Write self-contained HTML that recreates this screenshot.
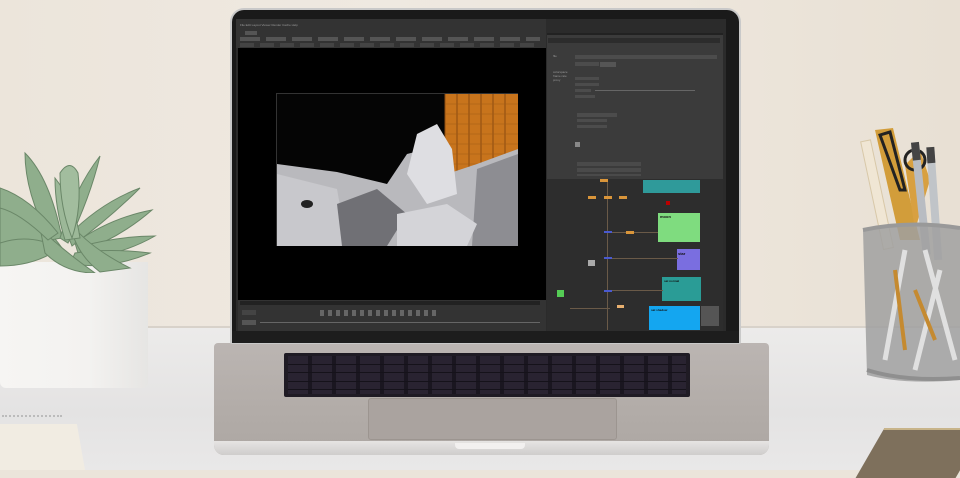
<!DOCTYPE html>
<html><head><style>
*{margin:0;padding:0;box-sizing:border-box}
body{width:960px;height:470px;overflow:hidden;position:relative;font-family:"Liberation Sans",sans-serif;background:#ebe4da}
.a{position:absolute}
.t{font-size:3px;color:#999;position:absolute;white-space:nowrap}
</style></head><body>
<div class="a" style="left:0;top:0;width:960px;height:328px;background:linear-gradient(90deg,#ece5db,#efe9e1 40%,#ede6dc 70%,#e8e0d4)"></div>
<div class="a" style="left:0;top:327px;width:960px;height:143px;background:linear-gradient(180deg,#ecebea,#e4e3e3 60%,#e9e8e8)"></div>
<div class="a" style="left:0;top:326px;width:960px;height:2px;background:#d8d2ca"></div>

<!-- plant -->
<div class="a" style="left:0;top:262px;width:148px;height:126px;background:linear-gradient(90deg,#f6f5f3 0,#f3f2f0 60%,#e6e5e3 100%);border-radius:0 0 6px 6px"></div>
<svg class="a" style="left:0;top:148px" width="160" height="125">
<g fill="#8fae8c" stroke="#6a8768" stroke-width="1">
<path d="M0 60 Q35 62 62 100 Q30 108 0 100Z"/>
<path d="M0 95 Q30 85 60 100 Q35 118 0 118Z"/>
<path d="M25 5 Q50 30 62 90 L50 92 Q25 45 25 5Z"/>
<path d="M100 8 Q90 50 68 95 L60 90 Q75 40 100 8Z"/>
<path d="M140 40 Q110 70 72 98 L68 88 Q100 55 140 40Z"/>
<path d="M152 62 Q120 90 78 105 L75 95 Q110 70 152 62Z"/>
<path d="M155 88 Q120 108 80 110 L82 98 Q120 88 155 88Z"/>
<path d="M150 105 Q110 122 70 116 L75 105 Q110 100 150 105Z"/>
<path d="M40 80 Q60 100 95 125 Q65 125 45 105Z"/>
<path d="M70 75 Q90 100 130 120 L100 124 Q75 105 70 75Z"/>
<path d="M0 40 Q30 50 58 85 L48 92 Q20 65 0 60Z"/>
<path d="M55 30 Q75 55 80 90 L65 92 Q55 60 55 30Z" fill="#9cb898"/>
<path d="M60 25 Q70 10 78 25 Q82 60 72 90 Q60 60 60 25Z" fill="#a2bd9e"/>
</g></svg>

<!-- notebook -->
<div class="a" style="left:0;top:424px;width:85px;height:46px;background:#f1ece2;transform:skewX(10deg);transform-origin:bottom"></div>
<div class="a" style="left:2px;top:415px;width:60px;height:12px;border-top:2px dotted #bbb"></div>

<!-- pencil holder -->
<svg class="a" style="left:845px;top:120px" width="115" height="265">
<rect x="26" y="20" width="10" height="110" fill="#f0e6d4" stroke="#d8c8a8" transform="rotate(-12 30 70)"/>
<path d="M30 10 L48 8 L70 100 L75 120 L55 120Z" fill="#d29d3a"/>
<path d="M35 15 L45 12 L60 70 L55 70Z" fill="none" stroke="#222" stroke-width="3"/>
<path d="M60 45 L75 30 L85 60 L70 110 Z" fill="#d8a040"/>
<circle cx="70" cy="40" r="10" fill="none" stroke="#222" stroke-width="3"/>
<rect x="72" y="25" width="8" height="110" fill="#b8bcc2" transform="rotate(-6 76 80)"/>
<rect x="85" y="30" width="8" height="110" fill="#c0c4c8" transform="rotate(-4 89 80)"/>
<rect x="72" y="22" width="8" height="18" fill="#444" transform="rotate(-6 76 80)"/>
<rect x="85" y="27" width="8" height="16" fill="#444" transform="rotate(-4 89 80)"/>
<path d="M18 110 Q65 100 115 108 L115 260 Q60 265 22 255Z" fill="#a0a0a0" opacity=".85"/>
<path d="M18 110 Q65 100 115 108" stroke="#999" stroke-width="4" fill="none"/>
<path d="M22 250 Q60 262 115 258" stroke="#8f8f8f" stroke-width="4" fill="none"/>
<path d="M60 130 L40 240 M80 130 L110 240 M95 150 L70 250" stroke="#e0e0e0" stroke-width="5"/>
<path d="M50 150 L60 230 M70 170 L90 220" stroke="#c58a30" stroke-width="4"/>
</svg>
<div class="a" style="left:870px;top:428px;width:100px;height:50px;background:#7e705c;transform:skewX(-30deg);border-top:2px solid #c8b48a"></div>

<!-- base -->
<div class="a" style="left:214px;top:343px;width:555px;height:112px;background:linear-gradient(180deg,#bbb5b2,#b2aca8 60%,#ada7a3);border-radius:4px 4px 10px 10px"></div>
<div class="a" style="left:214px;top:441px;width:555px;height:14px;background:linear-gradient(180deg,#e6e4e3,#cfcdcc);border-radius:0 0 10px 10px"></div>
<div class="a" style="left:455px;top:443px;width:70px;height:6px;background:#f2f0ef;border-radius:0 0 4px 4px"></div>
<div class="a" style="left:284px;top:353px;width:406px;height:44px;background:#1f1b24;border-radius:2px"></div>
<div class="a" style="left:288px;top:356px;width:398px;height:38px;background:repeating-linear-gradient(90deg,#2b2433 0,#2b2433 20px,#1a1620 20px,#1a1620 24px),#2b2433;opacity:.9"></div>
<div class="a" style="left:288px;top:364px;width:398px;height:1px;background:#15121a"></div>
<div class="a" style="left:288px;top:372px;width:398px;height:1px;background:#15121a"></div>
<div class="a" style="left:288px;top:381px;width:398px;height:1px;background:#15121a"></div>
<div class="a" style="left:288px;top:389px;width:398px;height:1px;background:#15121a"></div>
<div class="a" style="left:368px;top:398px;width:249px;height:42px;background:#aaa39f;border:1px solid #9c9590;border-radius:3px"></div>

<!-- lid -->
<div class="a" style="left:230px;top:8px;width:511px;height:336px;background:#c9c9c9;border-radius:14px 14px 2px 2px"></div>
<div class="a" style="left:232px;top:10px;width:507px;height:333px;background:#1a1a1a;border-radius:12px 12px 0 0"></div>
<div class="a" style="left:236px;top:19px;width:490px;height:312px;background:#2b2b2b"></div>
<div class="a" style="left:236px;top:19px;width:310px;height:29px;background:#333"></div>
<div class="t" style="left:240px;top:23px">File Edit Layout Viewer Render Cache Help</div>
<div class="a" style="left:245px;top:31px;width:12px;height:4px;background:#555"></div>
<div class="a" style="left:240px;top:37px;width:300px;height:4px;background:repeating-linear-gradient(90deg,#555 0,#555 20px,#333 20px,#333 26px)"></div>
<div class="a" style="left:240px;top:43px;width:300px;height:4px;background:repeating-linear-gradient(90deg,#444 0,#444 14px,#333 14px,#333 20px)"></div>
<div class="a" style="left:238px;top:48px;width:308px;height:252px;background:#000"></div>
<div class="a" style="left:276px;top:93px;width:242px;height:153px;border:1px solid #333;background:#000"></div>
<svg class="a" style="left:277px;top:94px" width="241" height="152">
<rect width="241" height="152" fill="#050505"/>
<rect x="168" y="0" width="73" height="100" fill="#c8741c"/>
<path d="M168 0 V100 M180 0V100 M192 0V100 M204 0V100 M216 0V100 M228 0V100" stroke="#8a4a10" stroke-width="1"/>
<path d="M168 10H241 M168 20H241 M168 30H241 M168 40H241 M168 50H241 M168 60H241 M168 70H241 M168 80H241 M168 90H241" stroke="#a05a14" stroke-width=".6"/>
<path d="M0 70 L60 78 L110 90 L130 60 L150 55 L170 80 L200 70 L241 55 L241 152 L0 152Z" fill="#b9b9bd"/>
<path d="M0 80 L60 95 L70 152 L0 152Z" fill="#c8c8cc"/>
<path d="M200 75 L241 60 L241 152 L195 152Z" fill="#8d8d92"/>
<path d="M60 110 L100 95 L130 120 L110 152 L65 152Z" fill="#707075"/>
<path d="M140 40 L160 30 L175 55 L180 100 L150 110 L130 80Z" fill="#dedee2"/>
<ellipse cx="30" cy="110" rx="6" ry="4" fill="#222"/>
<path d="M120 120 L170 110 L200 130 L190 152 L120 152Z" fill="#d4d4d8"/>
</svg>
<div class="a" style="left:238px;top:300px;width:308px;height:31px;background:#333"></div>
<div class="a" style="left:240px;top:301px;width:300px;height:4px;background:#222"></div>
<div class="a" style="left:320px;top:310px;width:120px;height:6px;background:repeating-linear-gradient(90deg,#666 0,#666 4px,#333 4px,#333 8px)"></div>
<div class="a" style="left:242px;top:310px;width:14px;height:5px;background:#444"></div>
<div class="a" style="left:242px;top:320px;width:14px;height:5px;background:#555"></div>
<div class="a" style="left:260px;top:322px;width:280px;height:1px;background:#666"></div>
<div class="a" style="left:547px;top:33px;width:176px;height:146px;background:#3b3b3b;border-top:2px solid #222"></div>
<div class="a" style="left:548px;top:38px;width:172px;height:5px;background:#2c2c2c"></div>
<div class="a" style="left:575px;top:55px;width:142px;height:4px;background:#4c4c4c"></div>
<div class="a" style="left:575px;top:62px;width:24px;height:4px;background:#4c4c4c"></div>
<div class="a" style="left:600px;top:62px;width:16px;height:5px;background:#555"></div>
<div class="a" style="left:575px;top:77px;width:24px;height:3px;background:#4c4c4c"></div>
<div class="a" style="left:575px;top:83px;width:24px;height:3px;background:#4c4c4c"></div>
<div class="a" style="left:575px;top:89px;width:16px;height:3px;background:#4c4c4c"></div>
<div class="a" style="left:595px;top:90px;width:100px;height:1px;background:#666"></div>
<div class="a" style="left:575px;top:95px;width:20px;height:3px;background:#4c4c4c"></div>
<div class="a" style="left:577px;top:113px;width:40px;height:4px;background:#4c4c4c"></div>
<div class="a" style="left:577px;top:119px;width:30px;height:3px;background:#4c4c4c"></div>
<div class="a" style="left:577px;top:125px;width:30px;height:3px;background:#4c4c4c"></div>
<div class="a" style="left:575px;top:142px;width:5px;height:5px;background:#888"></div>
<div class="a" style="left:577px;top:162px;width:64px;height:14px;background:repeating-linear-gradient(180deg,#4a4a4a 0,#4a4a4a 4px,#3b3b3b 4px,#3b3b3b 6px)"></div>
<div class="t" style="left:553px;top:54px">file<br>&nbsp;<br>&nbsp;<br>&nbsp;<br>colorspace<br>frame rate<br>proxy</div>
<div class="a" style="left:547px;top:179px;width:176px;height:152px;background:#2d2d2d"></div>
<div class="a" style="left:607px;top:180px;width:1px;height:150px;background:#6a5a48"></div>
<div class="a" style="left:643px;top:180px;width:57px;height:13px;background:#2f9a9a"></div>
<div class="a" style="left:658px;top:213px;width:42px;height:29px;background:#7fdc7f"></div>
<div class="t" style="left:660px;top:214px;color:#111;font-size:4px;font-weight:bold">moon</div>
<div class="a" style="left:677px;top:249px;width:23px;height:21px;background:#7a6ee0"></div>
<div class="t" style="left:678px;top:251px;color:#111;font-size:4px;font-weight:bold">star</div>
<div class="a" style="left:662px;top:277px;width:39px;height:24px;background:#2a9c96"></div>
<div class="t" style="left:664px;top:279px;color:#111;font-size:3px;font-weight:bold">sat normal</div>
<div class="a" style="left:649px;top:306px;width:51px;height:24px;background:#14a6f0"></div>
<div class="t" style="left:651px;top:308px;color:#111;font-size:3px;font-weight:bold">sat shadow</div>
<div class="a" style="left:666px;top:201px;width:4px;height:4px;background:#b00"></div>
<div class="a" style="left:608px;top:232px;width:50px;height:1px;background:#6a5a48"></div>
<div class="a" style="left:608px;top:258px;width:70px;height:1px;background:#6a5a48"></div>
<div class="a" style="left:608px;top:290px;width:55px;height:1px;background:#6a5a48"></div>
<div class="a" style="left:570px;top:308px;width:40px;height:1px;background:#6a5a48"></div>
<div class="a" style="left:588px;top:196px;width:8px;height:3px;background:#d9953a"></div>
<div class="a" style="left:604px;top:196px;width:8px;height:3px;background:#d9953a"></div>
<div class="a" style="left:619px;top:196px;width:8px;height:3px;background:#d9953a"></div>
<div class="a" style="left:600px;top:179px;width:8px;height:3px;background:#d9953a"></div>
<div class="a" style="left:626px;top:231px;width:8px;height:3px;background:#d9953a"></div>
<div class="a" style="left:604px;top:231px;width:8px;height:2px;background:#4a5ad0"></div>
<div class="a" style="left:604px;top:257px;width:8px;height:2px;background:#4a5ad0"></div>
<div class="a" style="left:604px;top:290px;width:8px;height:2px;background:#4a5ad0"></div>
<div class="a" style="left:588px;top:260px;width:7px;height:6px;background:#aaa"></div>
<div class="a" style="left:557px;top:290px;width:7px;height:7px;background:#5c5"></div>
<div class="a" style="left:617px;top:305px;width:7px;height:3px;background:#e8b070"></div>
<div class="a" style="left:701px;top:306px;width:18px;height:20px;background:#555"></div>
<div class="a" style="left:232px;top:331px;width:507px;height:12px;background:#1d1d1d"></div>
</body></html>
